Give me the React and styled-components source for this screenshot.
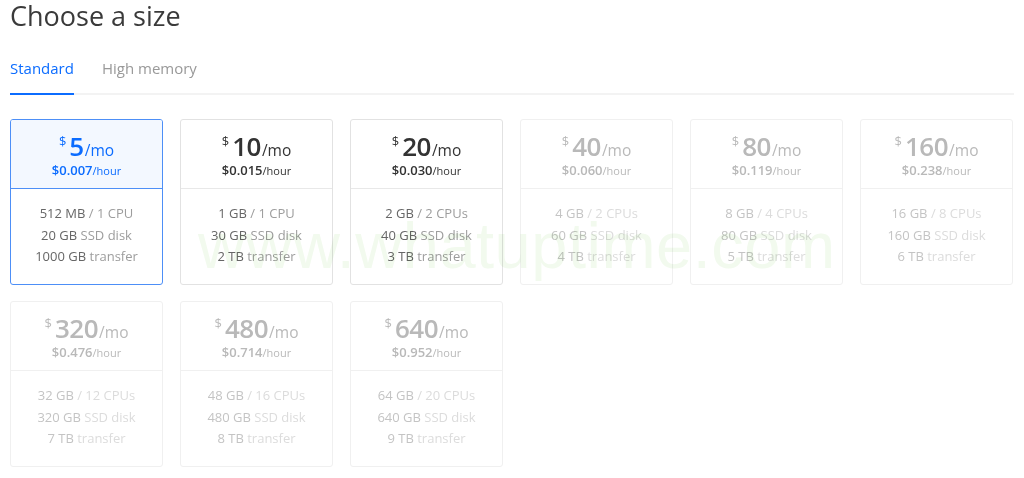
import React from 'react';
import styled, { createGlobalStyle } from 'styled-components';

const GlobalStyle = createGlobalStyle`
    body {
        margin: 0;
        background: #fff;
        font-family: 'Open Sans', 'Liberation Sans', sans-serif;
    }
`;

const Page = styled.div`
    position: relative;
    width: 1024px;
    height: 478px;
    overflow: hidden;
    padding: 0 10px;
    box-sizing: border-box;
`;

const Title = styled.h2`
    margin: 0;
    font-size: 27px;
    line-height: 32px;
    font-weight: 400;
    color: #3a3a3a;
`;

const Tabs = styled.div`
    display: flex;
    gap: 28px;
    margin-top: 26px;
    border-bottom: 2px solid #f3f3f3;
`;

const Tab = styled.div`
    font-size: 15px;
    line-height: 20px;
    padding-bottom: 15px;
    margin-bottom: -2px;
    color: ${(p) => (p.active ? '#0b6cff' : '#999')};
    border-bottom: 2px solid ${(p) => (p.active ? '#0b6cff' : 'transparent')};
`;

const Grid = styled.div`
    display: grid;
    grid-template-columns: repeat(6, 153px);
    column-gap: 17px;
    row-gap: 16px;
    margin-top: 24px;
`;

const Card = styled.div`
    height: 166px;
    box-sizing: border-box;
    border: 1px solid ${(p) => (p.selected ? '#4d8ff7' : p.disabled ? '#f0f0f0' : '#e2e2e2')};
    border-radius: 3px;
    display: flex;
    flex-direction: column;
    overflow: hidden;
`;

const Head = styled.div`
    height: 69px;
    flex-shrink: 0;
    box-sizing: border-box;
    display: flex;
    flex-direction: column;
    align-items: center;
    justify-content: center;
    padding-top: 2px;
    background: ${(p) => (p.selected ? '#f3f8ff' : 'transparent')};
    border-bottom: 1px solid ${(p) => (p.selected ? '#4d8ff7' : p.disabled ? '#f0f0f0' : '#e8e8e8')};
    color: ${(p) => (p.selected ? '#0b6cff' : p.disabled ? '#b9b9b9' : '#333')};
`;

const Price = styled.div`
    display: flex;
    align-items: baseline;
    line-height: 27px;
`;

const Dollar = styled.span`
    font-size: 13px;
    align-self: flex-start;
    line-height: 16px;
    margin-right: 3px;
`;

const Amount = styled.span`
    font-size: 26px;
    font-weight: 600;
    letter-spacing: -0.5px;
`;

const Per = styled.span`
    font-size: 15.5px;
    margin-left: 1px;
`;

const Hourly = styled.div`
    font-size: 13px;
    font-weight: 600;
    line-height: 15px;
    margin-top: -1px;

    span {
        font-size: 11px;
        font-weight: 400;
    }
`;

const Specs = styled.div`
    flex: 1;
    display: flex;
    flex-direction: column;
    align-items: center;
    justify-content: center;
    padding-bottom: 2px;
`;

const Line = styled.div`
    font-size: 13px;
    line-height: 21.5px;
    color: ${(p) => (p.disabled ? '#c4c4c4' : '#666')};

    span {
        color: ${(p) => (p.disabled ? '#dcdcdc' : '#9d9d9d')};
    }
`;

// faint watermark lying over the cards, as in the source image
const Watermark = styled.div`
    position: absolute;
    left: 198px;
    top: 208px;
    font-size: 65px;
    line-height: 76px;
    color: #f2faee;
    mix-blend-mode: multiply;
    pointer-events: none;
    font-family: 'Liberation Sans', sans-serif;
    letter-spacing: 0.5px;
`;

const sizes = [
    { price: 5, hour: '0.007', mem: '512 MB', cpu: '1 CPU', disk: 20, transfer: '1000 GB' },
    { price: 10, hour: '0.015', mem: '1 GB', cpu: '1 CPU', disk: 30, transfer: '2 TB' },
    { price: 20, hour: '0.030', mem: '2 GB', cpu: '2 CPUs', disk: 40, transfer: '3 TB' },
    { price: 40, hour: '0.060', mem: '4 GB', cpu: '2 CPUs', disk: 60, transfer: '4 TB' },
    { price: 80, hour: '0.119', mem: '8 GB', cpu: '4 CPUs', disk: 80, transfer: '5 TB' },
    { price: 160, hour: '0.238', mem: '16 GB', cpu: '8 CPUs', disk: 160, transfer: '6 TB' },
    { price: 320, hour: '0.476', mem: '32 GB', cpu: '12 CPUs', disk: 320, transfer: '7 TB' },
    { price: 480, hour: '0.714', mem: '48 GB', cpu: '16 CPUs', disk: 480, transfer: '8 TB' },
    { price: 640, hour: '0.952', mem: '64 GB', cpu: '20 CPUs', disk: 640, transfer: '9 TB' },
];

const SizeCard = ({ size, selected, disabled }) => (
    <Card selected={selected} disabled={disabled}>
        <Head selected={selected} disabled={disabled}>
            <Price>
                <Dollar>$</Dollar>
                <Amount>{size.price}</Amount>
                <Per>/mo</Per>
            </Price>
            <Hourly>
                ${size.hour}
                <span>/hour</span>
            </Hourly>
        </Head>
        <Specs>
            <Line disabled={disabled}>
                {size.mem} <span>/ {size.cpu}</span>
            </Line>
            <Line disabled={disabled}>
                {size.disk} GB <span>SSD disk</span>
            </Line>
            <Line disabled={disabled}>
                {size.transfer} <span>transfer</span>
            </Line>
        </Specs>
    </Card>
);

const App = () => (
    <Page>
        <GlobalStyle />
        <Title>Choose a size</Title>
        <Tabs>
            <Tab active>Standard</Tab>
            <Tab>High memory</Tab>
        </Tabs>
        <Grid>
            {sizes.map((s, i) => (
                <SizeCard key={s.price} size={s} selected={i === 0} disabled={i > 2} />
            ))}
        </Grid>
        <Watermark>www.whatuptime.com</Watermark>
    </Page>
);

export default App;
